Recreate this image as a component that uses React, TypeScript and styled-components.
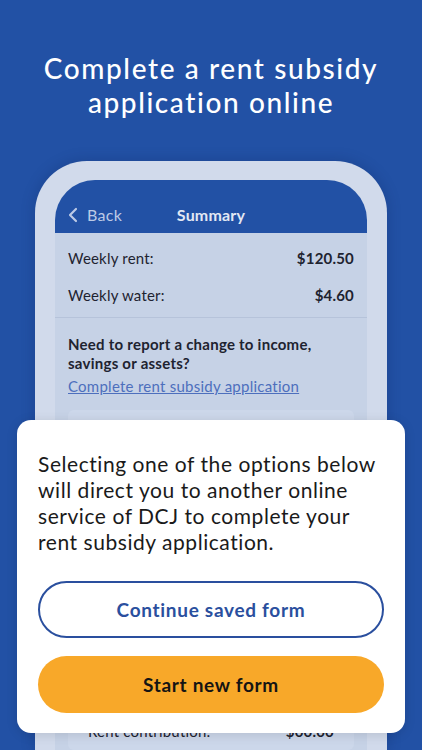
import React from "react";
import styled, { createGlobalStyle } from "styled-components";

const GlobalStyle = createGlobalStyle`
  body {
    margin: 0;
    background: #2251a5;
    font-family: Lato, "Open Sans", sans-serif;
  }
`;

const Page = styled.div`
  position: relative;
  width: 422px;
  height: 750px;
  overflow: hidden;
  background: #2251a5;
  display: flex;
  flex-direction: column;
  align-items: center;
`;

const Title = styled.h1`
  margin: 51px 0 0;
  color: #ffffff;
  font-size: 28px;
  font-weight: 500;
  line-height: 34px;
  text-align: center;
  letter-spacing: 1.6px;
`;

const Phone = styled.div`
  margin-top: 42px;
  width: 352px;
  flex: 1;
  box-sizing: border-box;
  padding: 19px 20px 0;
  background: #d1daeb;
  border-radius: 52px 52px 0 0;
  box-shadow: 0 0 14px rgba(10, 30, 80, 0.25);
`;

const Screen = styled.div`
  height: 100%;
  background: #c6d2e6;
  border-radius: 40px 40px 0 0;
  overflow: hidden;
  display: flex;
  flex-direction: column;
`;

const Header = styled.div`
  height: 53px;
  flex: none;
  box-sizing: border-box;
  background: #2251a5;
  display: grid;
  grid-template-columns: 1fr auto 1fr;
  align-items: end;
  padding: 0 13px 8px;
`;

const BackLink = styled.div`
  display: flex;
  align-items: center;
  gap: 9px;
  color: #bccae6;
  font-size: 16px;
  line-height: 20px;
  letter-spacing: 0.3px;
`;

const HeaderTitle = styled.div`
  color: #e2e8f4;
  font-size: 16px;
  line-height: 20px;
  font-weight: 700;
  letter-spacing: 0.2px;
`;

const Section = styled.div<{ $top: number; $bottom: number; $divider?: boolean }>`
  padding: ${(p) => p.$top}px 13px ${(p) => p.$bottom}px;
  border-bottom: ${(p) => (p.$divider ? "1px solid #b6c3da" : "none")};
`;

const Row = styled.div<{ $height?: number }>`
  height: ${(p) => p.$height ?? 37}px;
  display: flex;
  align-items: center;
  justify-content: space-between;
  font-size: 15px;
  letter-spacing: 0.2px;
  color: #1e2330;
`;

const Value = styled.span`
  font-weight: 700;
`;

const Prompt = styled.div`
  font-size: 15px;
  font-weight: 700;
  line-height: 19px;
  letter-spacing: 0.25px;
  color: #1e2330;
`;

const Link = styled.a`
  display: block;
  margin-top: 4px;
  font-size: 15px;
  line-height: 19px;
  letter-spacing: 0.25px;
  color: #4d6fbd;
  text-decoration: underline;
`;

const Card = styled.div`
  margin: 14px 13px 0;
  flex: 1;
  background: #ccd7ea;
  border-radius: 6px;
  padding: 0 20px 10px;
  display: flex;
  flex-direction: column;
  justify-content: flex-end;
`;

const Modal = styled.div`
  position: absolute;
  left: 17px;
  top: 420px;
  width: 388px;
  box-sizing: border-box;
  padding: 31px 21px 20px;
  background: #ffffff;
  border-radius: 14px;
  box-shadow: 0 2px 12px rgba(0, 0, 0, 0.12);
`;

const ModalText = styled.p`
  margin: 0 0 26px;
  font-size: 21px;
  line-height: 26px;
  color: #1a1a1a;
  letter-spacing: 0.55px;
`;

const Button = styled.button<{ $primary?: boolean }>`
  display: block;
  width: 100%;
  height: 57px;
  margin-top: ${(p) => (p.$primary ? 18 : 0)}px;
  border-radius: 29px;
  font-family: inherit;
  font-size: 19px;
  font-weight: 700;
  letter-spacing: 0.7px;
  cursor: pointer;
  border: ${(p) => (p.$primary ? "none" : "2px solid #2a4f9e")};
  background: ${(p) => (p.$primary ? "#f8a829" : "#ffffff")};
  color: ${(p) => (p.$primary ? "#141414" : "#2a4f9e")};
`;

const Chevron = () => (
  <svg width="10" height="16" viewBox="0 0 10 16" fill="none">
    <path d="M8 2L2 8l6 6" stroke="#bccae6" strokeWidth="2.2" strokeLinecap="round" strokeLinejoin="round" />
  </svg>
);

export default function App() {
  return (
    <>
      <GlobalStyle />
      <Page>
        <Title>
          Complete a rent subsidy
          <br />
          application online
        </Title>
        <Phone>
          <Screen>
            <Header>
              <BackLink>
                <Chevron />
                Back
              </BackLink>
              <HeaderTitle>Summary</HeaderTitle>
              <span />
            </Header>
            <Section $top={6} $bottom={4} $divider>
              <Row>
                <span>Weekly rent:</span>
                <Value>$120.50</Value>
              </Row>
              <Row>
                <span>Weekly water:</span>
                <Value>$4.60</Value>
              </Row>
            </Section>
            <Section $top={17} $bottom={0}>
              <Prompt>
                Need to report a change to income,
                <br />
                savings or assets?
              </Prompt>
              <Link>Complete rent subsidy application</Link>
            </Section>
            <Card>
              <Row $height={19}>
                <span>Rent contribution:</span>
                <Value>$00.00</Value>
              </Row>
            </Card>
          </Screen>
        </Phone>
        <Modal>
          <ModalText>
            Selecting one of the options below will direct you to another online service of DCJ to complete your
            rent subsidy application.
          </ModalText>
          <Button>Continue saved form</Button>
          <Button $primary>Start new form</Button>
        </Modal>
      </Page>
    </>
  );
}
